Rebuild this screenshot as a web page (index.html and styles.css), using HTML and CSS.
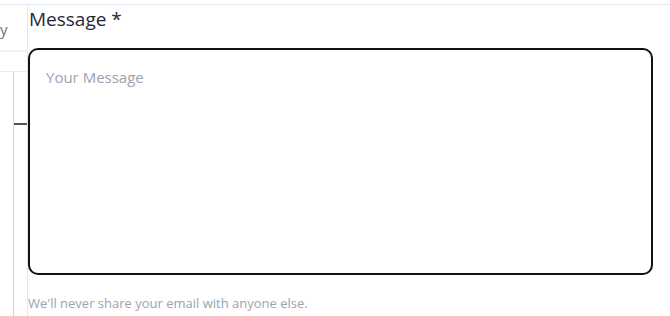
FILE: index.html
```html
<!DOCTYPE html>
<html>
<head>
<meta charset="utf-8">
<link rel="stylesheet" href="styles.css">
</head>
<body>
<div class="frame">
  <aside class="side">
    <div class="tab"><span class="tab-text">y</span></div>
    <div class="subrow"></div>
    <div class="tree">
      <div class="tree-line"></div>
      <div class="tick"></div>
    </div>
  </aside>
  <main class="main">
    <label class="label" for="msg">Message *</label>
    <textarea id="msg" class="field" placeholder="Your Message"></textarea>
    <p class="help">We'll never share your email with anyone else.</p>
  </main>
</div>
</body>
</html>
```
FILE: styles.css
```css
html, body {
  margin: 0;
  padding: 0;
  background: #ffffff;
  overflow: hidden;
}
body {
  font-family: "Open Sans", "Noto Sans", sans-serif;
}
.frame {
  margin-top: 4px;
  border-top: 1px solid #e2e8f0;
  display: flex;
  height: 311px;
}
.side {
  width: 27px;
  flex: none;
  border-right: 1px solid #e5e7eb;
  display: flex;
  flex-direction: column;
}
.tab {
  height: 45px;
  border-bottom: 2px solid #eef1f5;
  display: flex;
  align-items: center;
}
.tab-text {
  font-size: 15px;
  color: #6b7280;
  white-space: nowrap;
  margin-left: 0;
  margin-top: 2px;
}
.subrow {
  height: 19px;
  border-bottom: 1px solid #e8edf3;
}
.tree {
  flex: 1;
  display: flex;
  flex-direction: column;
}
.tree-line {
  flex: 1;
  margin-left: 13px;
  border-left: 1px solid #d4d4d8;
}
.tick {
  position: absolute;
  left: 14px;
  top: 123px;
  width: 13px;
  height: 2px;
  background: #555555;
}
.main {
  flex: 1;
  padding-right: 17px;
  display: flex;
  flex-direction: column;
}
.label {
  font-size: 19px;
  color: #1f2937;
  line-height: 24px;
  margin-top: 2px;
  margin-left: 1px;
}
.field {
  margin-top: 17px;
  height: 227px;
  box-sizing: border-box;
  border: 2px solid #111111;
  border-radius: 10px;
  padding: 16px 16px;
  font-family: "Open Sans", "Noto Sans", sans-serif;
  font-size: 15px;
  line-height: 22px;
  resize: none;
  outline: none;
}
.field::placeholder {
  color: #9ca3af;
}
.help {
  margin: 20px 0 0 0;
  font-size: 13px;
  line-height: 16px;
  color: #9ca3af;
}
```
